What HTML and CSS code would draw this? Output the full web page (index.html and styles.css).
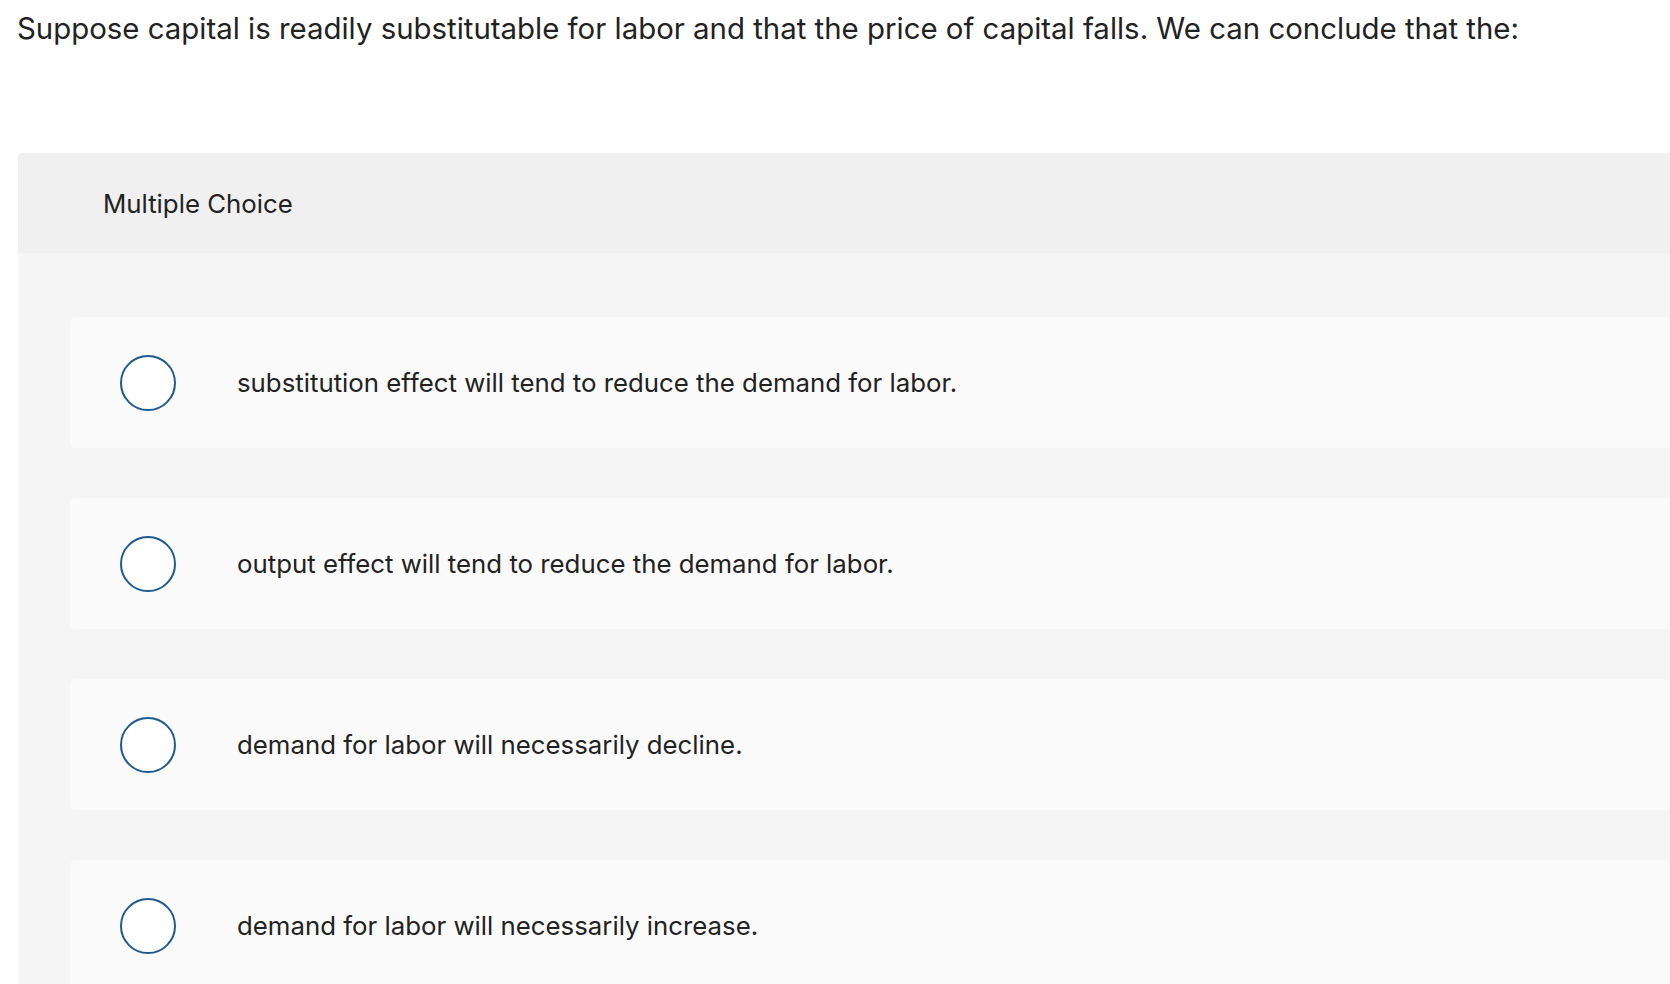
FILE: index.html
```html
<!DOCTYPE html>
<html>
<head>
<meta charset="utf-8">
<link rel="stylesheet" href="styles.css">
</head>
<body>
<div class="page">
  <p class="question">Suppose capital is readily substitutable for labor and that the price of capital falls. We can conclude that the:</p>
  <div class="card">
    <div class="card-head">Multiple Choice</div>
    <div class="card-body">
      <div class="option"><span class="radio"></span><span class="label">substitution effect will tend to reduce the demand for labor.</span></div>
      <div class="option"><span class="radio"></span><span class="label">output effect will tend to reduce the demand for labor.</span></div>
      <div class="option"><span class="radio"></span><span class="label">demand for labor will necessarily decline.</span></div>
      <div class="option"><span class="radio"></span><span class="label">demand for labor will necessarily increase.</span></div>
    </div>
  </div>
</div>
</body>
</html>
```
FILE: styles.css
```css
html, body {
  margin: 0;
  padding: 0;
  background: #fff;
  overflow: hidden;
  height: 984px;
}
body {
  font-family: Inter, Lato, sans-serif;
  color: #222;
}
.page {
  padding: 0 0 0 18px;
  width: 1720px;
}
.question {
  margin: 0;
  padding-top: 10px;
  margin-left: -1px;
  font-size: 29.4px;
  line-height: 38px;
  height: 143px;
}
.card {
  background: #f5f5f5;
  border-radius: 5px 0 0 0;
  overflow: hidden;
}
.card-head {
  background: #f0f0f0;
  height: 100px;
  display: flex;
  align-items: center;
  padding-left: 85px;
  font-size: 25.8px;
}
.card-body {
  padding: 64px 0 0 52px;
  display: flex;
  flex-direction: column;
  gap: 50px;
}
.option {
  background: #fafafa;
  border-radius: 6px;
  height: 131px;
  display: flex;
  align-items: center;
  padding-left: 50px;
}
.radio {
  width: 52px;
  height: 52px;
  border: 2px solid #1f5a8f;
  border-radius: 50%;
  background: #fff;
  flex: none;
  margin-top: 1px;
}
.label {
  margin-left: 61px;
  font-size: 25.8px;
}
```
